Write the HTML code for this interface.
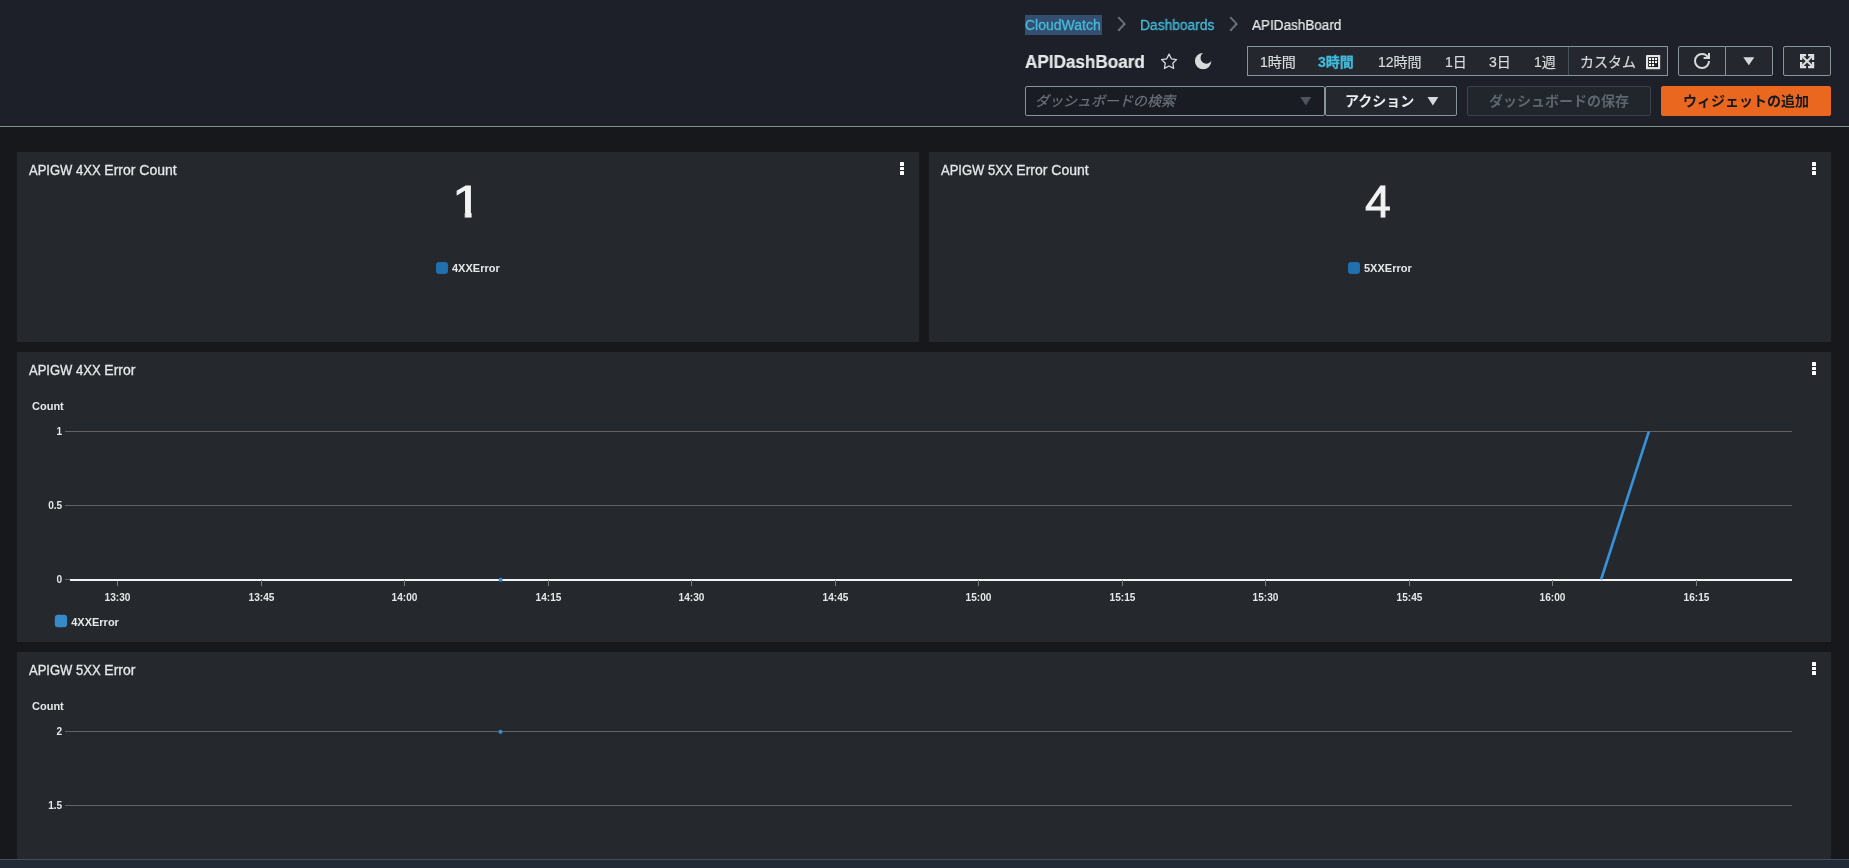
<!DOCTYPE html>
<html lang="ja">
<head>
<meta charset="utf-8">
<title>APIDashBoard - CloudWatch</title>
<style>
*{box-sizing:border-box;margin:0;padding:0}
html,body{width:1849px;height:868px;overflow:hidden;background:#17181c}
body{font-family:"Liberation Sans","Noto Sans CJK JP",sans-serif;color:#d5dbdb;position:relative;font-size:14px}
.abs{position:absolute;white-space:nowrap}
.wt,.t,.num,svg text{will-change:transform}
#header{position:absolute;left:0;top:0;width:1849px;height:126px;background:#1e2029}
#hline{position:absolute;left:0;top:126px;width:1849px;height:1px;background:#808e8e}
.t{-webkit-text-stroke:.2px currentColor;position:absolute;white-space:nowrap;line-height:20px;height:20px;display:inline-block;transform-origin:0 50%}
.link{color:#42bada;-webkit-text-stroke-width:.3px}
.box{position:absolute;border:1px solid #879596;border-radius:2px;background:#24272e}
.widget{position:absolute;background:#25282d}
.wt{position:absolute;left:12px;top:8px;font-size:14px;line-height:20px;color:#e4e8e8;-webkit-text-stroke:.3px #e4e8e8;white-space:nowrap;transform-origin:0 50%}
.cap{display:inline-block;transform:scaleX(.93);transform-origin:0 50%;margin-right:-5.6px}
.num{font-size:45px;line-height:56px;height:56px;color:#f2f3f3;-webkit-text-stroke:.8px #f2f3f3;transform-origin:0 50%}
.kebab{position:absolute;right:14.9px;top:10px;width:4.2px;height:13px}
.kebab i{position:absolute;left:0;width:4.2px;height:3.7px;background:#fff;border-radius:.6px}
svg{position:absolute;overflow:visible}
svg text{font-family:"Liberation Sans","Noto Sans CJK JP",sans-serif;fill:#e4e8e8}
</style>
</head>
<body>
<div id="header"></div>
<div id="hline"></div>

<!-- breadcrumbs -->
<div class="abs" id="sel" style="left:1025px;top:15px;width:77px;height:20px;background:#334e6e"></div>
<span class="t link" id="bc1" style="left:1025px;top:15px">CloudWatch</span>
<svg style="left:1117px;top:16px" width="10" height="16" viewBox="0 0 10 16"><path d="M1.2 1.1 L7.6 7.9 L1.2 14.7" fill="none" stroke="#687078" stroke-width="2"/></svg>
<span class="t link" id="bc2" style="left:1140px;top:15px;transform:scaleX(.985)">Dashboards</span>
<svg style="left:1229.3px;top:16px" width="10" height="16" viewBox="0 0 10 16"><path d="M1.2 1.1 L7.6 7.9 L1.2 14.7" fill="none" stroke="#687078" stroke-width="2"/></svg>
<span class="t" id="bc3" style="left:1252px;top:15px;transform:scaleX(.965);color:#eaeded">APIDashBoard</span>

<!-- title -->
<span class="t" id="title" style="left:1025px;top:51px;transform:scaleX(.951);font-size:18px;font-weight:700;line-height:22px;height:22px;color:#e4e8e8">APIDashBoard</span>
<svg id="star" style="left:1161px;top:53px" width="17" height="17" viewBox="0 0 17 17"><path d="M8.05 1.10 L10.37 5.80 L15.56 6.56 L11.81 10.22 L12.69 15.39 L8.05 12.95 L3.41 15.39 L4.29 10.22 L0.54 6.56 L5.73 5.80 Z" fill="none" stroke="#d5dbdb" stroke-width="1.25" stroke-linejoin="round"/></svg>
<svg id="moon" style="left:1194px;top:52px" width="18" height="18" viewBox="0 0 18 18"><path d="M9.1 0.9 A8.2 8.2 0 1 0 17.3 9.1 A5.9 5.9 0 1 1 9.1 0.9 Z" fill="#d5dbdb"/></svg>

<!-- time range -->
<div class="box" id="trbox" style="left:1247px;top:46px;width:421px;height:30px;border-radius:0"></div>
<div class="abs" style="left:1568px;top:47px;width:1px;height:28px;background:#4a5058"></div>
<span class="t" id="tr1" style="top:51.5px;left:1260px">1時間</span>
<span class="t link" id="tr2" style="top:51.5px;left:1318px;font-weight:700">3時間</span>
<span class="t" id="tr3" style="top:51.5px;left:1378px">12時間</span>
<span class="t" id="tr4" style="top:51.5px;left:1445px">1日</span>
<span class="t" id="tr5" style="top:51.5px;left:1489px">3日</span>
<span class="t" id="tr6" style="top:51.5px;left:1534px">1週</span>
<span class="t" id="tr7" style="top:51.5px;left:1580px">カスタム</span>
<svg id="cal" style="left:1645.9px;top:54.9px" width="14.2" height="14.2" viewBox="0 0 14.2 14.2"><rect width="14.2" height="14.2" rx=".5" fill="#dee4e4"/><rect x="2.2" y="2.2" width="9.8" height="9.8" fill="#0e1014"/><rect x="3.05" y="3.05" width="2.1" height="2.1" fill="#fff"/><rect x="6.05" y="3.05" width="2.1" height="2.1" fill="#fff"/><rect x="9.05" y="3.05" width="2.1" height="2.1" fill="#fff"/><rect x="3.05" y="6.05" width="2.1" height="2.1" fill="#fff"/><rect x="6.05" y="6.05" width="2.1" height="2.1" fill="#fff"/><rect x="9.05" y="6.05" width="2.1" height="2.1" fill="#fff"/><rect x="3.05" y="9.05" width="2.1" height="2.1" fill="#fff"/><rect x="6.05" y="9.05" width="2.1" height="2.1" fill="#fff"/><rect x="9.05" y="9.05" width="2.1" height="2.1" fill="#24272c"/></svg>

<!-- refresh buttons -->
<div class="box" style="left:1678px;top:46px;width:48px;height:30px;border-radius:2px 0 0 2px"></div>
<div class="box" style="left:1725px;top:46px;width:48px;height:30px;border-radius:0 2px 2px 0"></div>
<svg id="refresh" style="left:1694px;top:53px" width="16" height="16" viewBox="0 0 16 16"><g fill="none" stroke="#d5dbdb" stroke-width="2"><path d="M9.6 5H15V0" stroke-linejoin="miter"/><path d="M15 8a6.957 6.957 0 01-7 7 6.957 6.957 0 01-7-7 6.957 6.957 0 017-7 6.87 6.87 0 016.3 4"/></g></svg>
<svg style="left:1743px;top:57px" width="12" height="9" viewBox="0 0 12 9"><path d="M0.3 0.3 H11.3 L5.8 8.3 Z" fill="#d5dbdb"/></svg>
<div class="box" style="left:1783px;top:46px;width:48px;height:30px"></div>
<svg id="expand" style="left:1799.9px;top:53.9px" width="14.2" height="14.2" viewBox="0 0 14.2 14.2"><path fill="#dde3e3" d="M0.00 0.00 L6.10 0.00 L6.10 2.30 L2.30 2.30 L2.30 6.10 L0.00 6.10ZM14.20 0.00 L8.10 0.00 L8.10 2.30 L11.90 2.30 L11.90 6.10 L14.20 6.10ZM0.00 14.20 L6.10 14.20 L6.10 11.90 L2.30 11.90 L2.30 8.10 L0.00 8.10ZM14.20 14.20 L8.10 14.20 L8.10 11.90 L11.90 11.90 L11.90 8.10 L14.20 8.10Z"/><path d="M1.5 1.5L12.7 12.7M12.7 1.5L1.5 12.7" stroke="#d5dbdb" stroke-width="2.1"/></svg>

<!-- row 2 -->
<div class="box" style="left:1025px;top:86px;width:300px;height:30px;background:#1a1c23"></div>
<span class="t" id="ph" style="left:1034.5px;top:90.5px;font-style:italic;color:#6b737c">ダッシュボードの検索</span>
<svg style="left:1299.7px;top:97.2px" width="12" height="9" viewBox="0 0 12 9"><path d="M0.3 0 H11.3 L5.8 8.6 Z" fill="#4e545d"/></svg>
<div class="box" style="left:1325px;top:86px;width:132px;height:30px"></div>
<span class="t" id="act" style="-webkit-text-stroke-width:0;left:1345px;top:90.5px;font-weight:700;color:#eaeded">アクション</span>
<svg style="left:1427px;top:97px" width="12" height="9" viewBox="0 0 12 9"><path d="M0.5 0 H11.3 L5.9 8.6 Z" fill="#d5dbdb"/></svg>
<div class="box" style="left:1467px;top:86px;width:184px;height:30px;border-color:#3c424a;background:#21252c"></div>
<span class="t" id="save" style="-webkit-text-stroke-width:0;left:1489px;top:90.5px;font-weight:700;color:#5d656d">ダッシュボードの保存</span>
<div class="box" style="left:1661px;top:86px;width:170px;height:30px;border-color:#e9671f;background:#e9671f"></div>
<span class="t" id="add" style="-webkit-text-stroke-width:0;left:1683px;top:90.5px;font-weight:700;color:#16191f">ウィジェットの追加</span>

<!-- widget 1 -->
<div class="widget" style="left:17px;top:152px;width:902px;height:190px">
  <div class="wt"><span class="cap">APIGW 4XX</span> Error Count</div>
  <div class="kebab"><i style="top:0"></i><i style="top:4.85px;height:3.4px"></i><i style="top:9.2px"></i></div>
  <div class="abs num" id="n1" style="left:434.65px;top:21.6px;transform:scaleX(1.2);clip-path:polygon(0 0,40px 0,40px 38px,16.35px 38px,16.35px 50px,10.65px 50px,10.65px 38px,0 38px)">1</div>
  <div class="abs" style="left:418.8px;top:109.8px;width:12.4px;height:12.5px;border-radius:3.2px;background:#1f70ae"></div>
  <span class="t lg" style="left:434.7px;top:106.2px;-webkit-text-stroke:0;font-size:11px;color:#e4e8e8;font-weight:700">4XXError</span>
</div>

<!-- widget 2 -->
<div class="widget" style="left:929px;top:152px;width:902px;height:190px">
  <div class="wt"><span class="cap">APIGW 5XX</span> Error Count</div>
  <div class="kebab"><i style="top:0"></i><i style="top:4.85px;height:3.4px"></i><i style="top:9.2px"></i></div>
  <div class="abs num" id="n2" style="left:435.5px;top:21.7px;transform:scaleX(1.03)">4</div>
  <div class="abs" style="left:418.8px;top:109.8px;width:12.4px;height:12.5px;border-radius:3.2px;background:#1f70ae"></div>
  <span class="t lg" style="left:434.7px;top:106.2px;-webkit-text-stroke:0;font-size:11px;color:#e4e8e8;font-weight:700">5XXError</span>
</div>

<!-- widget 3 -->
<div class="widget" style="left:17px;top:352px;width:1814px;height:290px">
  <div class="wt"><span class="cap">APIGW 4XX</span> Error</div>
  <div class="kebab"><i style="top:0"></i><i style="top:4.85px;height:3.4px"></i><i style="top:9.2px"></i></div>
  <svg style="left:0;top:0" width="1814" height="290" viewBox="17 352 1814 290" font-size="11">
    <text x="32" y="410" font-weight="700">Count</text>
    <g stroke="#626361" stroke-width="1"><path d="M65 431.5H1792M65 505.5H1792"/></g>
    <path d="M65 579.5H70" stroke="#626361"/>
    <path d="M70 580H1792" stroke="#f2f3f3" stroke-width="2"/>
    <g stroke="#7d807f" stroke-width="1"><path d="M117.5 581V586M261.5 580V586M404.5 580V586M548.5 580V586M691.5 580V586M835.5 580V586M978.5 580V586M1122.5 580V586M1265.5 580V586M1409.5 580V586M1552.5 580V586M1696.5 580V586"/></g>
    <g text-anchor="end" transform="translate(0.2 0)" font-weight="700" font-size="10.1" letter-spacing="0"><text x="62" y="435.1">1</text><text x="62" y="509.1">0.5</text><text x="62" y="583.1">0</text></g>
    <g text-anchor="middle" font-weight="700" font-size="10.1" letter-spacing="0"><text x="117.5" y="601.2">13:30</text><text x="261.5" y="601.2">13:45</text><text x="404.5" y="601.2">14:00</text><text x="548.5" y="601.2">14:15</text><text x="691.5" y="601.2">14:30</text><text x="835.5" y="601.2">14:45</text><text x="978.5" y="601.2">15:00</text><text x="1122.5" y="601.2">15:15</text><text x="1265.5" y="601.2">15:30</text><text x="1409.5" y="601.2">15:45</text><text x="1552.5" y="601.2">16:00</text><text x="1696.5" y="601.2">16:15</text></g>
    <path d="M1601.1 579.5L1648.9 431.3" stroke="#3592db" stroke-width="2.6" fill="none"/>
    <circle cx="500.6" cy="579.7" r="2" fill="#2f8fd8"/>
    <rect x="54.8" y="614.8" width="12.3" height="12.4" rx="3.2" fill="#368ac8"/>
    <text x="71.2" y="626" font-weight="700" font-size="11">4XXError</text>
  </svg>
</div>

<!-- widget 4 -->
<div class="widget" style="left:17px;top:652px;width:1814px;height:207px">
  <div class="wt"><span class="cap">APIGW 5XX</span> Error</div>
  <div class="kebab"><i style="top:0"></i><i style="top:4.85px;height:3.4px"></i><i style="top:9.2px"></i></div>
  <svg style="left:0;top:0" width="1814" height="207" viewBox="17 652 1814 207" font-size="11">
    <text x="32" y="710" font-weight="700">Count</text>
    <g stroke="#626361" stroke-width="1"><path d="M65 731.5H1792M65 805.5H1792"/></g>
    <g text-anchor="end" transform="translate(0.2 0)" font-weight="700" font-size="10.1" letter-spacing="0"><text x="62" y="735.1">2</text><text x="62" y="809.1">1.5</text></g>
    <circle cx="500.5" cy="731.8" r="2.1" fill="#2f8fd8"/>
  </svg>
</div>

<!-- footer -->
<div class="abs" style="left:0;top:859px;width:1849px;height:1px;background:#474e58"></div>
<div class="abs" style="left:0;top:860px;width:1849px;height:8px;background:#212a36"></div>
</body>
</html>
